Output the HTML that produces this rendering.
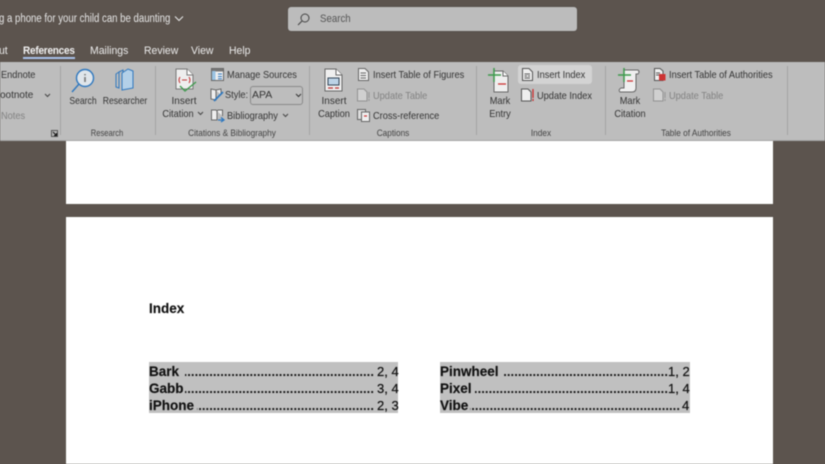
<!DOCTYPE html>
<html><head><meta charset="utf-8">
<style>
html,body{margin:0;padding:0}
body{width:825px;height:464px;overflow:hidden;position:relative;background:#5c544e;font-family:"Liberation Sans",sans-serif;filter:blur(.4px)}
.a{position:absolute;white-space:nowrap}
.t{position:absolute;white-space:nowrap;font-size:10.5px;line-height:14px;color:#333;transform:scaleX(.88);transform-origin:0 50%}
.c{transform:translateX(-50%) scaleX(.88);transform-origin:50% 50%}
.d{color:#828282}
.m{position:absolute;white-space:nowrap;font-size:11px;line-height:14px;color:#ececec;top:44px;transform:scaleX(.95);transform-origin:0 50%}
.g{position:absolute;white-space:nowrap;font-size:9.5px;line-height:12px;color:#444;top:128px;transform:translateX(-50%) scaleX(.87)}
.s{position:absolute;top:66px;width:1px;height:69px;background:#a3a3a3}
svg{position:absolute;overflow:visible}
.e,.n,.o{position:absolute;white-space:nowrap;line-height:17px;height:17px;color:#111;font-size:13px}
.e{font-weight:bold;font-size:13.5px;-webkit-text-stroke:.15px #111}
.n{-webkit-text-stroke:.2px #111}
.o{overflow:hidden;direction:rtl;font-weight:bold;letter-spacing:.05px}
</style></head><body>
<div class="a" style="left:-1px;top:12px;font-size:11.5px;line-height:15px;color:#e6e6e6;transform:scaleX(.835);transform-origin:0 50%">g a phone for your child can be daunting</div>
<svg style="left:174px;top:15px" width="10" height="8"><path d="M1 1.5 L5 5.5 L9 1.5" fill="none" stroke="#e6e6e6" stroke-width="1.1"/></svg>

<div class="a" style="left:288px;top:7px;width:289px;height:24px;background:#bcbcbc;border-radius:3px;box-shadow:0 0 1px #444"></div>
<svg style="left:297px;top:13px" width="14" height="13"><circle cx="8" cy="5" r="4" fill="none" stroke="#444" stroke-width="1"/><path d="M5 8 L1 12" stroke="#444" stroke-width="1.1"/></svg>
<div class="a" style="left:320px;top:12px;font-size:11px;line-height:14px;color:#555;transform:scaleX(.88);transform-origin:0 50%">Search</div>

<div class="m" style="left:-1px">ut</div>
<div class="m" style="left:23px;font-weight:bold;color:#f2f2f2;letter-spacing:-.25px;transform:scaleX(.91)">References</div>
<div class="a" style="left:23px;top:57px;width:52px;height:2px;background:#a9c1ea"></div>
<div class="m" style="left:90px">Mailings</div>
<div class="m" style="left:144px">Review</div>
<div class="m" style="left:191px">View</div>
<div class="m" style="left:229px">Help</div>

<div class="a" style="left:0;top:62px;width:825px;height:79px;background:#bdbdbd;border-bottom:1px solid #a5a5a5;box-sizing:border-box"></div>
<div class="a" style="left:66px;top:141px;width:707px;height:63px;background:#fff"></div>
<div class="a" style="left:66px;top:217px;width:707px;height:247px;background:#fff"></div>

<div class="s" style="left:60px"></div><div class="s" style="left:155px"></div><div class="s" style="left:309px"></div><div class="s" style="left:476px"></div><div class="s" style="left:605px"></div><div class="s" style="left:787px"></div>

<!-- Footnotes -->
<div class="t" style="left:1px;top:68px">Endnote</div>
<div class="t" style="left:0;top:88px;transform:scaleX(.95)">ootnote</div>
<svg style="left:44px;top:93px" width="7" height="5"><path d="M1 1 L3.5 3.5 L6 1" fill="none" stroke="#444"/></svg>
<div class="t d" style="left:1px;top:109px">Notes</div>
<svg style="left:51px;top:130px" width="7" height="7"><rect x=".5" y=".5" width="6" height="6" fill="none" stroke="#555"/><path d="M2 2 L5.5 5.5 M3 5.5H5.5V3" stroke="#111" fill="none"/></svg>

<!-- Research -->
<svg style="left:70px;top:68px" width="26" height="26"><circle cx="15" cy="10" r="8.5" fill="#dfe5ea" stroke="#2f78bf" stroke-width="1.4"/><path d="M9 16 L2 24" stroke="#2f78bf" stroke-width="1.4"/><path d="M15 9 V14 M15 6 V7.4" stroke="#777" stroke-width="1.6"/></svg>
<svg style="left:115px;top:68px" width="20" height="24"><path d="M1 6 L4 4 V20 L1 19 Z" fill="none" stroke="#2f78bf"/><path d="M4 4 L8 2 V20" fill="none" stroke="#2f78bf"/><path d="M7 5 L13 1 L18 3 V20 L7 22 Z" fill="#b3d0e8" stroke="#2f78bf"/></svg>
<div class="t c" style="left:83px;top:94px;transform:translateX(-50%) scaleX(.82)">Search</div>
<div class="t c" style="left:125px;top:94px;transform:translateX(-50%) scaleX(.82)">Researcher</div>
<div class="g" style="left:107px;transform:translateX(-50%) scaleX(.8)">Research</div>

<!-- Citations -->
<svg style="left:174px;top:68px" width="24" height="25"><path d="M2 1 H13 L19 7 V21 H2 Z" fill="#eee" stroke="#777"/><path d="M13 1 V7 H19" fill="#fff" stroke="#777"/><path d="M6 9 Q4 12 6 15 M15 9 Q17 12 15 15 M8 12 H13" fill="none" stroke="#c23b3b" stroke-width="1.1"/><path d="M6 18 L11 23 L22 14" fill="none" stroke="#3d9a4c" stroke-width="1.3"/></svg>
<div class="t c" style="left:184px;top:94px;transform:translateX(-50%) scaleX(.95)">Insert</div>
<div class="t c" style="left:178px;top:107px">Citation</div>
<svg style="left:197px;top:111px" width="7" height="5"><path d="M1 1 L3.5 3.5 L6 1" fill="none" stroke="#444"/></svg>
<svg style="left:211px;top:68px" width="13" height="13"><rect x=".5" y=".5" width="12" height="12" fill="#eee" stroke="#666"/><rect x="1" y="1" width="11" height="2.5" fill="#777"/><rect x="1" y="3" width="3.5" height="9" fill="#9bc3e3"/><path d="M7 6H11M7 8.5H11M7 10.7H11" stroke="#2f78bf"/></svg>
<div class="t" style="left:227px;top:68px">Manage Sources</div>
<svg style="left:210px;top:88px" width="15" height="14"><path d="M1 1 L6 2 V12 L1 11 Z M6 2 L11 1 V7" fill="#eee" stroke="#666"/><path d="M4 13 L13 4" stroke="#2f78bf" stroke-width="1.8"/></svg>
<div class="t" style="left:225px;top:88px">Style:</div>
<div class="a" style="left:250px;top:86px;width:51px;height:17px;border:1px solid #8a8a8a;border-radius:3px"></div>
<div class="t" style="left:252px;top:88px;transform:none">APA</div>
<svg style="left:295px;top:93px" width="7" height="5"><path d="M1 1 L3.5 3.5 L6 1" fill="none" stroke="#333"/></svg>
<svg style="left:211px;top:109px" width="14" height="13"><path d="M.5 1 H5 L6 2 V11 H.5 Z M6 2 L7 1 H11.5 V7" fill="#eee" stroke="#666"/><path d="M7 11 H12 M10 8.5 L13 11 L10 13" fill="none" stroke="#2f78bf" stroke-width="1.3"/></svg>
<div class="t" style="left:227px;top:109px">Bibliography</div>
<svg style="left:282px;top:113px" width="7" height="5"><path d="M1 1 L3.5 3.5 L6 1" fill="none" stroke="#444"/></svg>
<div class="g" style="left:232px">Citations &amp; Bibliography</div>

<!-- Captions -->
<svg style="left:324px;top:68px" width="19" height="25"><path d="M1 1 H12 L18 7 V23 H1 Z" fill="#efefef" stroke="#666"/><path d="M12 1 V7 H18" fill="#fff" stroke="#666"/><rect x="4" y="10" width="11" height="7" fill="#bcd3e6" stroke="#345"/><path d="M4 20 H9 M11 20 H15" stroke="#b33" stroke-width="1.2"/></svg>
<div class="t c" style="left:334px;top:94px;transform:translateX(-50%) scaleX(.95)">Insert</div>
<div class="t c" style="left:334px;top:107px">Caption</div>
<svg style="left:358px;top:68px" width="11" height="13"><path d="M.5 .5 H7 L10.5 4 V12.5 H.5 Z" fill="#eee" stroke="#666"/><path d="M2.5 5H8M2.5 7.5H8M2.5 10H8" stroke="#666"/></svg>
<div class="t" style="left:373px;top:68px">Insert Table of Figures</div>
<svg style="left:357px;top:88px" width="13" height="14" opacity=".6"><path d="M.5 1 H7 L10 4 V13 H.5 Z" fill="#ddd" stroke="#777"/><path d="M12 4V10M12 11V13" stroke="#777"/></svg>
<div class="t d" style="left:373px;top:88.5px">Update Table</div>
<svg style="left:357px;top:109px" width="13" height="13"><rect x=".5" y=".5" width="8" height="10" fill="#ddd" stroke="#666"/><rect x="4.5" y="3" width="8" height="9.5" fill="#eee" stroke="#666"/><path d="M7 7H10" stroke="#c33" stroke-width="1.2"/></svg>
<div class="t" style="left:373px;top:109px">Cross-reference</div>
<div class="g" style="left:393px">Captions</div>

<!-- Index -->
<svg style="left:487px;top:67px" width="23" height="26"><path d="M7 4 H16 L21 9 V25 H7 Z" fill="#efefef" stroke="#666"/><path d="M16 4 V9 H21" fill="#fff" stroke="#666"/><path d="M1 8 H14 M7 1 V15" stroke="#3d9a4c" stroke-width="1.5"/><path d="M11 17 H19" stroke="#c33" stroke-width="1.3"/></svg>
<div class="t c" style="left:500px;top:94px">Mark</div>
<div class="t c" style="left:500px;top:107px">Entry</div>
<div class="a" style="left:518px;top:65px;width:74px;height:19px;background:#d3d3d3;border-radius:3px"></div>
<svg style="left:522px;top:68px" width="11" height="13"><path d="M.5 .5 H7 L10.5 4 V12.5 H.5 Z" fill="#eee" stroke="#555"/><path d="M2.5 6H8M2.5 8H5M6 8H8M2.5 10H8" stroke="#555"/></svg>
<div class="t" style="left:537px;top:68px">Insert Index</div>
<svg style="left:521px;top:88px" width="13" height="14"><path d="M.5 1 H7 L10 4 V13 H.5 Z" fill="#eee" stroke="#555"/><path d="M12 1V10M12 11V13" stroke="#c22" stroke-width="1.2"/></svg>
<div class="t" style="left:537px;top:88.5px">Update Index</div>
<div class="g" style="left:541px">Index</div>

<!-- Authorities -->
<svg style="left:617px;top:67px" width="24" height="26"><path d="M7 3 H21 Q23 5 21 7 H19 V21 Q19 25 15 25 H3 Q1 23 4 21 H7 Z" fill="#efefef" stroke="#666"/><path d="M1 8 H14 M7 1 V15" stroke="#3d9a4c" stroke-width="1.5"/><path d="M10 14 H16" stroke="#c33" stroke-width="1.3"/></svg>
<div class="t c" style="left:630px;top:94px">Mark</div>
<div class="t c" style="left:630px;top:107px">Citation</div>
<svg style="left:654px;top:68px" width="12" height="13"><path d="M.5 .5 H6 L9 3 V12.5 H.5 Z" fill="#eee" stroke="#555"/><path d="M2 5H6M2 7H5" stroke="#555"/><rect x="5" y="6" width="6.5" height="6.5" fill="#c33"/></svg>
<div class="t" style="left:669px;top:68px">Insert Table of Authorities</div>
<svg style="left:653px;top:88px" width="13" height="14" opacity=".6"><path d="M.5 1 H7 L10 4 V13 H.5 Z" fill="#ddd" stroke="#777"/><path d="M12 4V10M12 11V13" stroke="#777"/></svg>
<div class="t d" style="left:669px;top:88.5px">Update Table</div>
<div class="g" style="left:696px">Table of Authorities</div>

<!-- Document -->
<div class="e" style="left:149px;top:300px">Index</div>
<div class="a" style="left:149px;top:362px;width:249px;height:51px;background:#c0c0c0"></div>
<div class="a" style="left:440px;top:362px;width:250px;height:51px;background:#c0c0c0"></div>

<div class="e" style="left:149px;top:363px">Bark</div>
<div class="o" style="left:185px;width:189px;top:363px">......................................................................</div>
<div class="n" style="left:377px;top:363px">2, 4</div>
<div class="e" style="left:149px;top:380px">Gabb</div>
<div class="o" style="left:185px;width:189px;top:380px">......................................................................</div>
<div class="n" style="left:377px;top:380px">3, 4</div>
<div class="e" style="left:149px;top:397px">iPhone</div>
<div class="o" style="left:197px;width:177px;top:397px">......................................................................</div>
<div class="n" style="left:377px;top:397px">2, 3</div>

<div class="e" style="left:440px;top:363px">Pinwheel</div>
<div class="o" style="left:503px;width:165px;top:363px">......................................................................</div>
<div class="n" style="left:668px;top:363px">1, 2</div>
<div class="e" style="left:440px;top:380px">Pixel</div>
<div class="o" style="left:475px;width:193px;top:380px">......................................................................</div>
<div class="n" style="left:668px;top:380px">1, 4</div>
<div class="e" style="left:440px;top:397px">Vibe</div>
<div class="o" style="left:470px;width:210px;top:397px">......................................................................</div>
<div class="n" style="left:682px;top:397px">4</div>
</body></html>
